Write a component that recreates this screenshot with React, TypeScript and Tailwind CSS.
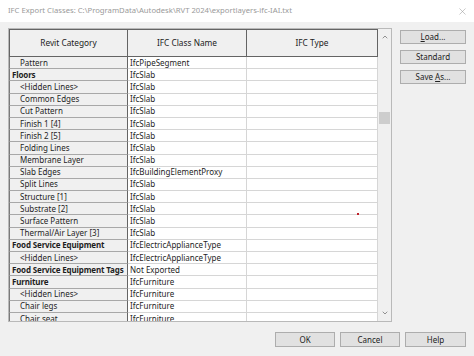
import { ChevronUp, ChevronDown, X } from 'lucide-react';

const rows: { name: string; ifc: string; bold?: boolean }[] = [
  { name: 'Pattern', ifc: 'IfcPipeSegment' },
  { name: 'Floors', ifc: 'IfcSlab', bold: true },
  { name: '<Hidden Lines>', ifc: 'IfcSlab' },
  { name: 'Common Edges', ifc: 'IfcSlab' },
  { name: 'Cut Pattern', ifc: 'IfcSlab' },
  { name: 'Finish 1 [4]', ifc: 'IfcSlab' },
  { name: 'Finish 2 [5]', ifc: 'IfcSlab' },
  { name: 'Folding Lines', ifc: 'IfcSlab' },
  { name: 'Membrane Layer', ifc: 'IfcSlab' },
  { name: 'Slab Edges', ifc: 'IfcBuildingElementProxy' },
  { name: 'Split Lines', ifc: 'IfcSlab' },
  { name: 'Structure [1]', ifc: 'IfcSlab' },
  { name: 'Substrate [2]', ifc: 'IfcSlab' },
  { name: 'Surface Pattern', ifc: 'IfcSlab' },
  { name: 'Thermal/Air Layer [3]', ifc: 'IfcSlab' },
  { name: 'Food Service Equipment', ifc: 'IfcElectricApplianceType', bold: true },
  { name: '<Hidden Lines>', ifc: 'IfcElectricApplianceType' },
  { name: 'Food Service Equipment Tags', ifc: 'Not Exported', bold: true },
  { name: 'Furniture', ifc: 'IfcFurniture', bold: true },
  { name: '<Hidden Lines>', ifc: 'IfcFurniture' },
  { name: 'Chair legs', ifc: 'IfcFurniture' },
  { name: 'Chair seat', ifc: 'IfcFurniture' },
];

function Btn({ children, w = 'w-[66px]', h = 'h-[14px]' }: { children: React.ReactNode; w?: string; h?: string }) {
  return (
    <div className={`${w} ${h} bg-[#e1e1e1] border border-[#adadad] flex items-center justify-center text-[8px] text-[#222]`}>
      {children}
    </div>
  );
}

export default function App() {
  return (
    <div
      className="relative w-[474px] h-[356px] bg-[#f0f0f0] flex flex-col overflow-hidden"
      style={{ fontFamily: '"Noto Sans", "Open Sans", sans-serif' }}
    >
      {/* title bar */}
      <div className="h-[22px] bg-white flex items-center justify-between pl-[8px] pr-[6px]">
        <span className="text-[7.7px] text-[#9a9a9a] whitespace-nowrap">
          IFC Export Classes: C:\ProgramData\Autodesk\RVT 2024\exportlayers-ifc-IAI.txt
        </span>
        <X size={11} strokeWidth={1.2} className="text-[#9a9a9a]" />
      </div>

      <div className="flex pt-[6px] pl-[8px]">
        {/* table */}
        <div className="w-[384px] h-[294px] border border-[#b9b9b9] bg-white flex overflow-hidden">
          <div className="w-[369px] flex flex-col">
            <div className="grid grid-cols-[119px_119px_131px] h-[28px] bg-[#f0f0f0] text-[8.3px] text-[#222] shrink-0">
              <div className="border border-[#646464] flex items-center justify-center">Revit Category</div>
              <div className="border-y border-r border-[#646464] flex items-center justify-center">IFC Class Name</div>
              <div className="border-y border-r border-[#646464] flex items-center justify-center">IFC Type</div>
            </div>
            {rows.map((r, i) => (
              <div key={i} className="grid grid-cols-[119px_119px_131px] h-[12.2px] shrink-0 text-[8px] leading-none text-[#1e1e1e]">
                <div
                  className={`bg-[#f0f0f0] border-l border-r border-b border-l-[#7a7a7a] border-r-[#646464] border-b-[#a8a8a8] flex items-center whitespace-nowrap overflow-hidden ${r.bold ? 'font-bold pl-[2px] tracking-[-0.15px]' : 'pl-[10px]'}`}
                >
                  {r.name}
                </div>
                <div className="border-b border-r border-[#d6d6d6] flex items-center pl-[2px] whitespace-nowrap">{r.ifc}</div>
                <div className="border-b border-r border-[#d6d6d6]"></div>
              </div>
            ))}
          </div>
          {/* scrollbar */}
          <div className="flex-1 bg-[#f0f0f0] flex flex-col items-center justify-between py-[4px]">
            <ChevronUp size={8} strokeWidth={2} className="text-[#606060]" />
            <div className="flex-1 w-full relative">
              <div className="absolute left-[1px] right-[1px] top-[71px] h-[12px] bg-[#cdcdcd]" />
            </div>
            <ChevronDown size={8} strokeWidth={2} className="text-[#606060]" />
          </div>
        </div>

        {/* side buttons */}
        <div className="flex flex-col gap-[6px] pl-[8px] pt-[2px]">
          <Btn>
            <span><span className="underline">L</span>oad...</span>
          </Btn>
          <Btn>Standard</Btn>
          <Btn>
            <span>Save <span className="underline">A</span>s...</span>
          </Btn>
        </div>
      </div>

      {/* bottom buttons */}
      <div className="flex justify-end gap-[5px] pr-[8px] pt-[10px]">
        <Btn w="w-[60px]" h="h-[15px]">OK</Btn>
        <Btn w="w-[60px]" h="h-[15px]">Cancel</Btn>
        <Btn w="w-[61px]" h="h-[15px]">Help</Btn>
      </div>

      <div className="absolute left-[357px] top-[213px] w-[2px] h-[2px] bg-[#c0202a]" />
    </div>
  );
}
